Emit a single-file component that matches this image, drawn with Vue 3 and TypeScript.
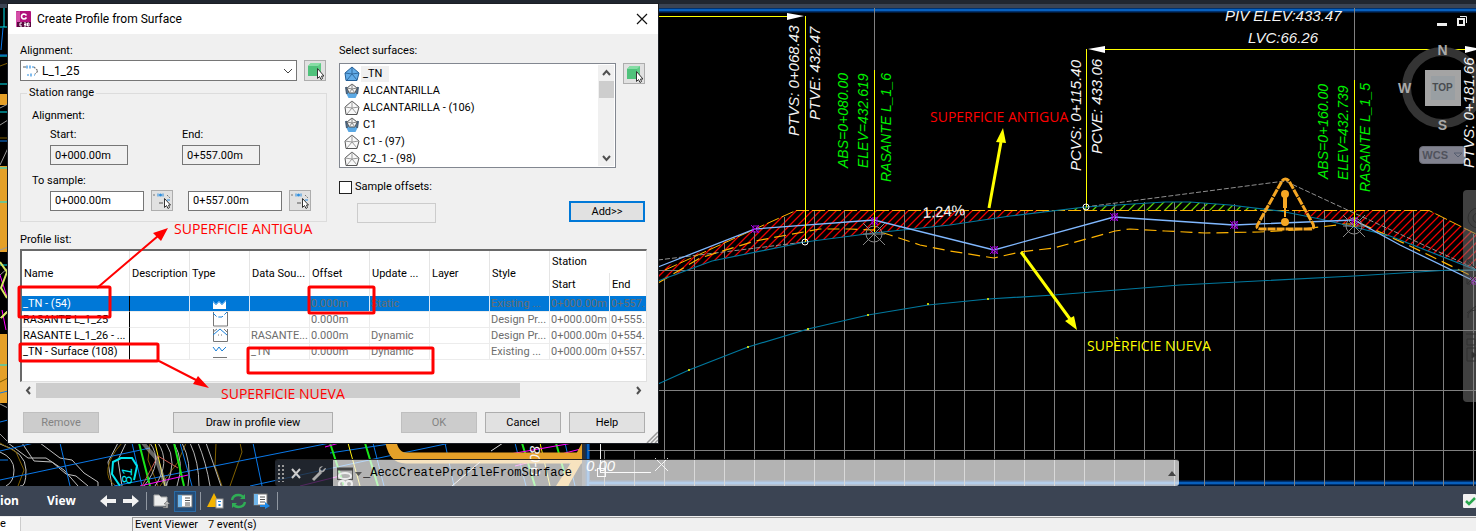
<script setup lang="ts">
import { ref } from 'vue'

interface ProfileRow {
  name: string
  type: 'static' | 'design' | 'design2' | 'surface'
  source: string
  update: string
  style: string
  start: string
  end: string
}

const alignment = ref('L_1_25')
const sampleStart = ref('0+000.00m')
const sampleEnd = ref('0+557.00m')
const sampleOffsets = ref(false)
const selectedProfile = ref(0)

const surfaces = [
  { name: '_TN', kind: 'active' },
  { name: 'ALCANTARILLA', kind: 'corridor' },
  { name: 'ALCANTARILLA - (106)', kind: 'tin' },
  { name: 'C1', kind: 'corridor' },
  { name: 'C1 - (97)', kind: 'tin' },
  { name: 'C2_1 - (98)', kind: 'tin' },
]

const profiles: ProfileRow[] = [
  { name: '_TN - (54)', type: 'static', source: '', update: 'Static', style: 'Existing ...', start: '0+000.00m', end: '0+557.' },
  { name: 'RASANTE L_1_25', type: 'design', source: '', update: '', style: 'Design Pr...', start: '0+000.00m', end: '0+555.' },
  { name: 'RASANTE L_1_26 - ...', type: 'design2', source: 'RASANTE...', update: 'Dynamic', style: 'Design Pr...', start: '0+000.00m', end: '0+554.' },
  { name: '_TN - Surface (108)', type: 'surface', source: '_TN', update: 'Dynamic', style: 'Existing ...', start: '0+000.00m', end: '0+557.' },
]

// Vertical grid lines: [x, top]
const verticals: [number, number][] = [
  [604, 450], [634, 450], [664, 278], [694, 257], [724, 243], [754, 231], [784, 217],
  [814, 210], [844, 210], [874, 8], [904, 210], [934, 210], [964, 210], [994, 210],
  [1024, 210], [1054, 210], [1084, 208], [1114, 203], [1144, 202], [1174, 202],
  [1204, 203], [1234, 204], [1264, 208], [1294, 210], [1324, 210], [1354, 8],
  [1384, 210], [1413, 210], [1443, 218], [1473, 234],
]
const horizontals = [270, 330, 390, 450]
const samples: [number, number][] = [[689, 370], [748, 347], [808, 329], [868, 315], [928, 304], [988, 299]]
const nodes: [number, number][] = [[755, 229], [874, 221], [994, 250], [1114, 217], [1234, 225], [1354, 221], [1474, 281]]
const contourX = [150, 158, 166, 174, 182, 190, 198, 206]

// 45 degree hatch strokes covering the span from x0 to x1 between two levels
const hatch = (x0: number, x1: number, top: number, bottom: number, step: number) => {
  const h = bottom - top
  let d = ''
  for (let x = x0 - h; x < x1; x += step) d += `M${x} ${bottom}L${x + h} ${top}`
  return d
}
</script>

<template>
  <div class="screen">
    <header class="ribbon-edge"></header>

    <main class="workspace">
      <svg class="drawing" aria-label="Profile view">
        <defs>
          <clipPath id="cut-left"><path d="M658 270L754 229L796 210H1060L1010 216L950 225L874 233L805 242L712 261L658 282z" /></clipPath>
          <clipPath id="cut-right"><path d="M1290 210H1429L1476 234V270L1390 236L1354 227L1320 219z" /></clipPath>
          <clipPath id="fill-mid"><path d="M1060 210L1085 207L1165 202H1190L1230 205L1280 211z" /></clipPath>
        </defs>
        <g transform="translate(0,-8)">
          <!-- plan view: left strip and lower area -->
          <g fill="none">
            <path fill="#e5a028" d="M0 94H8V105H0zM0 166H8V252H0zM0 334H8V403H0z" />
            <path stroke="#00e5f0" d="M0 27H8M4 8V27M0 56H8M0 84H8M0 112H8M0 168H8M0 202H8M0 265H8M0 365H8" />
            <path stroke="#0a78e8" d="M3 28L1 50M0 55H8M0 141H8M0 393L8 391M0 422L8 420M0 460H8" />
            <path stroke="#999" d="M0 125L8 120M0 108L8 104M0 165L8 148M0 250L8 247M0 275L8 268M0 318L8 310M0 404L8 408M0 434L8 442" />
            <path stroke="#f0f" d="M0 275L8 300M2 310L6 330" />
            <path stroke="#7d5c00" d="M0 66L8 63M0 138H8M0 382L8 378" />
            <path stroke="#d8e860" stroke-width="2" d="M0 262L7 272L1 288L7 298M1 318L7 312" />
            <path stroke="#bfbfbf" d="M0 452Q14 458 14 470T6 486M0 444Q26 452 26 470T20 486M8 443L28 458H46L64 470L78 486M22 443L34 461L52 462L66 474L76 476L88 486M40 443L60 458L72 460L84 473L98 482L98 486M118 443L108 462L112 486M126 443L118 460L122 486" />
            <path stroke="#806000" d="M0 443L16 452L24 470L18 486M122 443Q110 456 108 468T116 486M150 443L148 460L158 486M186 443L178 462L160 486M216 443L215 466L222 486M240 443L242 452L230 486" />
            <path stroke="#0a78e8" d="M0 451L34 443M0 480L150 448M60 443L70 486M114 486L330 443M132 443L142 486M253 443L262 486M180 443L192 486M330 453L396 443M250 486L360 462L450 443M373 443L384 486M445 443L454 486M515 443L526 486M565 443L575 486" />
            <path v-for="(x, i) in contourX" :key="x" stroke="#b4b4b4" :d="`M${x} 443Q${x + 14 - i} 462 ${x - 6 + i * 3} 486`" />
            <path stroke="#00e5f0" stroke-width="2" d="M120 486L112 474L113 462L121 458H132L137 466L134 480" />
            <path stroke="#19e619" stroke-width="2" d="M139 443L150 486M174 443L184 486M330 443L344 486M365 443L378 486M522 443L535 486M556 443L568 486" />
            <path stroke="#ffef10" d="M155 443L165 486M348 443L360 486M540 443L550 486" />
            <path stroke="#f0f" d="M140 486L188 475M325 447L350 440M510 454L590 440M515 466L600 444M300 486L340 476" />
            <path stroke="#c65a52" d="M142 486L158 456L178 468" />
            <path stroke="#c8c8c8" stroke-width="4" d="M143 443L156 458L166 486" opacity=".5" />
            <path stroke="#e5a028" stroke-width="11" d="M390 436Q392 458 406 458H586" />
            <path fill="#e5a028" d="M582 443V462L568 486H556L574 458z" />
            <path stroke="#ddd" d="M491 451L503 443M452 486L480 462" />
            <rect x="582" y="443" width="5" height="43" fill="#2a2e35" />
          </g>
          <text class="cad-text cyan" transform="translate(132,484) rotate(-90)">81</text>
          <text class="cad-text white" transform="translate(540,476) rotate(-90)">0-08</text>

          <!-- profile view -->
          <path d="M588 486V443M588 10H1476M588 483H1476" stroke="#00316e" stroke-width="5" fill="none" />
          <path d="M588 486V443M588 10H1476M588 483H1476" stroke="#0860bd" fill="none" stroke-width="2" />
          <path fill="#000" d="M658 13H1476V480H590V443H658z" />

          <g fill="none" stroke-width="1.300">
            <path clip-path="url(#cut-left)" stroke="#f00000" :d="hatch(658, 1060, 205, 285, 8)" />
            <path clip-path="url(#cut-right)" stroke="#f00000" :d="hatch(1290, 1476, 205, 275, 8)" />
            <path clip-path="url(#fill-mid)" stroke="#60d000" :d="hatch(1060, 1290, 198, 214, 9)" />
          </g>

          <g stroke="#808080" shape-rendering="crispEdges">
            <line v-for="[x, top] in verticals" :key="x" :x1="x + 0.5" :x2="x + 0.5" :y1="top" y2="486" />
            <line v-for="y in horizontals" :key="y" :x1="y === 450 ? 588 : 658" x2="1476" :y1="y + 0.5" :y2="y + 0.5" />
            <path d="M600.500 443V472M600 472.500H651M597.500 468.500H605.500V476.500H597.500z" stroke="#eee" fill="none" />
          </g>

          <g fill="none">
            <path stroke="#909090" stroke-dasharray="5 2" d="M658 260L805 242M1085 207L1285 181L1354 213L1476 269" />
            <path stroke="#ffb400" stroke-dasharray="13 3" d="M665 270L755 229L796 210.500H1429L1476 234" />
            <path stroke="#ffb400" stroke-width="1.200" stroke-dasharray="12 6" d="M658 283L700 258L755 241L820 229H850L874 230L890 235L920 245L950 251L994 258L1020 252L1054 248L1090 238L1115 231L1130 229L1165 231L1205 233L1260 232L1295 230L1345 224H1362L1410 246L1476 278" />
            <path stroke="#00789e" stroke-width="1.200" d="M658 281L712 261L805 242L874 233L950 225L1010 216L1085 207L1165 202H1190L1230 205L1280 211L1320 219L1354 227L1390 236L1476 270" />
            <path stroke="#00789e" stroke-width="1.200" d="M658 384L689 370L748 347L808 329L868 315L928 305L988 299L1054 295L1180 285L1354 276L1450 270H1476" />
            <path stroke="#80b8ff" stroke-width="1.300" d="M658 267L755 229L874 220L994 250L1114 217L1234 225L1354 220L1400 245L1476 282" />
          </g>
          <circle v-for="[x, y] in samples" :key="x" :cx="x" :cy="y" r="1" fill="#ff0" />
          <g v-for="[x, y] in nodes" :key="x" :transform="`translate(${x},${y})`" stroke="#a000d8" fill="none">
            <path d="M-4 -4L4 4M-4 4L4 -4M-2 -3H3V3H-2z" />
          </g>
          <g v-for="[x, y] in [[874, 234], [1354, 226]]" :key="x" :transform="`translate(${x},${y})`" stroke="#888" fill="none">
            <circle r="8" />
            <path d="M-11 11L11 -11M-11 -11L11 11M-11 0H11" />
          </g>

          <g stroke="#ff0" fill="none" shape-rendering="crispEdges">
            <path d="M658 16.500H788M805.500 16V242M874.500 70V232M1086.500 49V207M1104 49.500H1470M1354.500 80V227" />
          </g>
          <path fill="#fff" d="M787 13L804 16L787 20zM1105 46L1088 49L1105 53zM1465 46V53L1476 50V48z" />
          <g fill="none" stroke="#fff">
            <circle cx="805" cy="242" r="3" />
            <circle cx="1086" cy="207" r="3" />
          </g>

          <g class="cad-text white">
            <text transform="translate(799,136) rotate(-90)">PTVS: 0+068.43</text>
            <text transform="translate(820,120) rotate(-90)">PTVE: 432.47</text>
            <text transform="translate(1081,171) rotate(-90)">PCVS: 0+115.40</text>
            <text transform="translate(1102,154) rotate(-90)">PCVE: 433.06</text>
            <text x="1225" y="21">PIV ELEV:433.47</text>
            <text x="1248" y="43">LVC:66.26</text>
            <text x="586" y="471">0.00</text>
            <text class="grade" transform="translate(923,218) rotate(-4)">1.24%</text>
            <path d="M655 458L668 471M668 458L655 471" stroke="#ddd" />
          </g>
          <g class="cad-text label green">
            <text transform="translate(848,168) rotate(-90)">ABS=0+080.00</text>
            <text transform="translate(868,168) rotate(-90)">ELEV=432.619</text>
            <text transform="translate(891,182) rotate(-90)">RASANTE L_1_6</text>
            <text transform="translate(1328,179) rotate(-90)">ABS=0+160.00</text>
            <text transform="translate(1348,180) rotate(-90)">ELEV=432.739</text>
            <text transform="translate(1370,192) rotate(-90)">RASANTE L_1_5</text>
          </g>

          <g stroke="#f5a623" fill="none" stroke-linejoin="round">
            <path stroke-width="3" d="M1282 181Q1285 177 1289 181L1313 224Q1315 229 1310 229H1261Q1255 229 1258 224z" stroke-dasharray="8 1" />
            <path stroke-width="4" d="M1285 195V208" />
            <path stroke-width="2" d="M1285 208V217" />
            <circle cx="1285" cy="194" r="3" fill="#f5a623" stroke-width="2" />
            <circle cx="1285" cy="222" r="3" fill="#f5a623" stroke-width="2" />
          </g>
        </g>
      </svg>

      <!-- viewport controls -->
      <div class="viewport-buttons">
        <button type="button" aria-label="Minimize viewport">
          <svg width="12" height="12"><path d="M1 9.500H11" stroke="#eee" stroke-width="3" /></svg>
        </button>
        <button type="button" aria-label="Restore viewport">
          <svg width="12" height="12" fill="none" stroke="#eee"><path d="M4 1.500H10.500V8" /><path d="M2 4H8V10H2z" stroke-width="2" /></svg>
        </button>
      </div>
      <div class="view-cube">
        <span class="north">N</span><span class="west">W</span><span class="south">S</span>
        <button type="button" class="cube-face">TOP</button>
      </div>
      <button type="button" class="wcs">WCS<svg width="10" height="6"><path d="M1 1H9L5 5z" fill="none" stroke="#565e70" /></svg></button>
      <nav class="nav-bar" aria-label="Navigation bar">
        <svg width="13" height="212" fill="none" stroke="#303030">
          <circle cx="15" cy="28" r="10" /><circle cx="15" cy="28" r="5" />
          <path d="M4 94L13 85M4 89V94H9M4 70L13 79M4 75V70H9M4 123L13 116M5 128Q4 120 13 120M3 144H13M4 149H12V155H4zM4 158H13V171H4z" />
          <path d="M9 162L13 165L9 168z" fill="#303030" />
        </svg>
      </nav>

      <!-- command line -->
      <div class="command-line">
        <svg class="command-tools" width="58" height="27" fill="none">
          <path d="M4 5V22M8 5V22" stroke="#999" stroke-width="2" stroke-dasharray="2 2" />
          <path d="M17 9L25 18M25 9L17 18" stroke="#ccc" stroke-width="2" />
          <path d="M38 20L46 12" stroke="#aaa" stroke-width="3" />
          <path d="M50 8L47 11L45 9L48 6Q43 6 44 12Q49 14 51 8z" fill="#aaa" />
        </svg>
        <button type="button" class="recent" aria-label="Recent commands">
          <svg width="30" height="26" fill="none">
            <rect x="4.500" y="8.500" width="15" height="11" stroke="#555" /><path d="M4 9H20" stroke="#444" stroke-width="3" />
            <ellipse cx="12" cy="16" rx="6" ry="3" stroke="#eee" stroke-width="2" /><circle cx="9" cy="24" r="3" stroke="#eee" stroke-width="2" /><circle cx="16" cy="24" r="3" stroke="#eee" stroke-width="2" />
            <path d="M22 12H29L25.500 16z" fill="#555" />
          </svg>
        </button>
        <input class="command-input" aria-label="Command" value="_AeccCreateProfileFromSurface" />
        <button type="button" class="history" aria-label="Command history">
          <svg width="8" height="5"><path d="M0 5L4 0L8 5z" fill="#444" /></svg>
        </button>
      </div>

      <!-- dialog window -->
      <section class="dialog" role="dialog" aria-labelledby="dialog-title">
        <header class="title-bar">
          <svg width="16" height="17" aria-hidden="true">
            <rect width="15" height="16" rx="1" fill="#b0127b" /><path d="M0 1L4 0V16H0z" fill="#d44fa8" />
            <rect x="1" y="11" width="14" height="5" fill="#5a0840" />
            <path d="M10.500 4.500Q9.500 3 8 3Q5.500 3.200 5.500 5.500T8 8Q9.500 8 10.500 6.500" stroke="#fff" stroke-width="1.600" fill="none" />
            <path d="M6 12H4V15H6M8 12H10V15H8M8 13.500H10M11.500 12V15H13V12z" stroke="#fff" fill="none" />
          </svg>
          <h1 id="dialog-title">Create Profile from Surface</h1>
          <button type="button" class="close" aria-label="Close">
            <svg width="12" height="12"><path d="M1 1L11 11M11 1L1 11" stroke="#111" stroke-width="1.200" /></svg>
          </button>
        </header>

        <div class="dialog-body">
          <div class="top-columns">
            <div class="left-column">
              <label for="alignment">Alignment:</label>
              <div class="picker-row">
                <div class="combo">
                  <svg width="16" height="14" fill="none" stroke-width="1.200">
                    <path d="M0 3H3" stroke="#777" /><path d="M4 1.500V4.500M7 1.500V4.500M9 3H11M4 11H6M8 9.500V12.500M11 11H12" stroke="#2a8de0" />
                    <path d="M11 3L15 7L12 10" stroke="#777" stroke-dasharray="2 1" />
                  </svg>
                  <select id="alignment" v-model="alignment">
                    <option>L_1_25</option>
                  </select>
                  <svg class="chevron" width="10" height="6"><path d="M1 1L5 5L9 1" stroke="#444" fill="none" /></svg>
                </div>
                <button type="button" class="pick" aria-label="Pick alignment">
                  <svg width="18" height="18"><path d="M2 4L5 1H15V11L12 14H2z" fill="#5ecb85" /><path d="M2 4L5 1H15L12 4z" fill="#86dda5" /><path d="M12 4V14H2V4z" fill="#4fc27b" /><path d="M11.500 6.500V16.500L13.500 14.500L15 17.500L16.500 16.500L15.500 14H18z" fill="#fff" stroke="#333" /></svg>
                </button>
              </div>

              <fieldset>
                <legend>Station range</legend>
                <div class="group-label">Alignment:</div>
                <div class="stations">
                  <div class="field">
                    <label for="start">Start:</label>
                    <input id="start" readonly value="0+000.00m" />
                  </div>
                  <div class="field">
                    <label for="end">End:</label>
                    <input id="end" readonly value="0+557.00m" />
                  </div>
                </div>
                <div id="to-sample" class="group-label">To sample:</div>
                <div class="samples">
                  <input v-model="sampleStart" aria-labelledby="to-sample" />
                  <button type="button" class="pick" aria-label="Pick start station">
                    <svg width="18" height="18" fill="none"><path d="M0 3H3M14 3L17 6" stroke="#777" stroke-dasharray="2 1" /><path d="M5 1.500V4.500M10 1.500V4.500M14 8H17" stroke="#2a8de0" /><circle cx="7.500" cy="3" r="1.500" fill="#2a8de0" /><path d="M6 11H10" stroke="#555" /><path d="M11.500 6.500V15.500L13.500 13.500L15 16.500L16.500 15.500L15.500 13H17.500z" fill="#fff" stroke="#333" /></svg>
                  </button>
                  <input v-model="sampleEnd" class="second" aria-label="To sample end station" />
                  <button type="button" class="pick" aria-label="Pick end station">
                    <svg width="18" height="18" fill="none"><path d="M0 3H3M14 3L17 6" stroke="#777" stroke-dasharray="2 1" /><path d="M5 1.500V4.500M10 1.500V4.500M14 8H17" stroke="#2a8de0" /><circle cx="7.500" cy="3" r="1.500" fill="#2a8de0" /><path d="M6 11H10" stroke="#555" /><path d="M11.500 6.500V15.500L13.500 13.500L15 16.500L16.500 15.500L15.500 13H17.500z" fill="#fff" stroke="#333" /></svg>
                  </button>
                </div>
              </fieldset>
            </div>

            <div class="right-column">
              <div id="surfaces-label" class="caption">Select surfaces:</div>
              <div class="surface-row">
                <div class="list-box">
                  <ul role="listbox" aria-labelledby="surfaces-label">
                    <li v-for="(s, i) in surfaces" :key="s.name" role="option" :aria-selected="i === 0">
                      <svg v-if="s.kind === 'corridor'" width="16" height="16">
                        <path d="M1.500 4H14.500L13 12L11.500 15H4.500L3 12z" fill="#5aa8e4" /><path d="M2 4L3 11M14 4L13 11" stroke="#4a6078" stroke-width="2" /><path d="M8 1L13 5L11 10H5L3 5z" fill="#f4f4f4" stroke="#555" /><path d="M8 1V6M3 5L8 6L13 5M5 10L8 6L11 10" stroke="#888" fill="none" />
                      </svg>
                      <svg v-else width="16" height="16">
                        <path d="M8 1L15 7L13 14.500H2L1 7z" :fill="s.kind === 'active' ? '#62ace8' : '#f8f8f8'" :stroke="s.kind === 'active' ? '#245f97' : '#555'" />
                        <path d="M8 1V8M1 7L8 8L15 7M3 14L8 8L13 14" :stroke="s.kind === 'active' ? '#326b9f' : '#999'" fill="none" />
                      </svg>
                      <span :class="{ focused: i === 0 }">{{ s.name }}</span>
                    </li>
                  </ul>
                  <div class="v-scroll" aria-hidden="true">
                    <svg width="9" height="16"><path d="M1 10L4.500 6L8 10" stroke="#505050" stroke-width="2" fill="none" /></svg>
                    <i></i>
                    <svg width="9" height="16"><path d="M1 6L4.500 10L8 6" stroke="#505050" stroke-width="2" fill="none" /></svg>
                  </div>
                </div>
                <button type="button" class="pick" aria-label="Pick surface">
                  <svg width="18" height="18"><path d="M2 4L5 1H15V11L12 14H2z" fill="#5ecb85" /><path d="M2 4L5 1H15L12 4z" fill="#86dda5" /><path d="M12 4V14H2V4z" fill="#4fc27b" /><path d="M11.500 6.500V16.500L13.500 14.500L15 17.500L16.500 16.500L15.500 14H18z" fill="#fff" stroke="#333" /></svg>
                </button>
              </div>
              <div class="check-row">
                <input id="offsets" v-model="sampleOffsets" type="checkbox" />
                <label for="offsets">Sample offsets:</label>
              </div>
              <div class="add-row">
                <input disabled aria-label="Offset values" />
                <button type="button" class="button default">Add&gt;&gt;</button>
              </div>
            </div>
          </div>

          <div id="profile-label" class="profile-label">Profile list:</div>
          <div class="table-frame">
            <table aria-labelledby="profile-label">
              <colgroup>
                <col class="c-name" /><col v-for="n in 8" :key="n" class="c-mid" /><col />
              </colgroup>
              <thead>
                <tr>
                  <th rowspan="2">Name</th><th rowspan="2">Description</th><th rowspan="2">Type</th>
                  <th rowspan="2">Data Sou...</th><th rowspan="2">Offset</th><th rowspan="2">Update ...</th>
                  <th rowspan="2">Layer</th><th rowspan="2">Style</th>
                  <th colspan="2" class="group">Station</th>
                </tr>
                <tr><th class="sub">Start</th><th class="sub">End</th></tr>
              </thead>
              <tbody>
                <tr v-for="(p, i) in profiles" :key="p.name" :class="{ selected: i === selectedProfile }" @click="selectedProfile = i">
                  <td class="name">{{ p.name }}</td>
                  <td></td>
                  <td class="type">
                    <svg width="16" height="15" fill="none">
                      <path v-if="p.type === 'static'" d="M1 13V6L4 9L7 6L10 9L14 5V13z" fill="#fff" />
                      <path v-if="p.type === 'static'" d="M1 5L4 8L7 5L10 8L14 4" stroke="#4fa3ea" />
                      <path v-if="p.type === 'design'" d="M1.500 0V14H15.500V0" stroke="#777" />
                      <path v-if="p.type === 'design'" d="M1 1L5 5H10L15 0" stroke="#1a80d8" stroke-dasharray="5 2" />
                      <path v-if="p.type === 'design2'" d="M1.500 1V13.500H15.500V1M1 4L5 1M15 4L12 1M6 7H7M9 7H10" stroke="#777" />
                      <path v-if="p.type === 'design2'" d="M1 7L8 1L15 7" stroke="#1a80d8" />
                      <path v-if="p.type === 'surface'" d="M1 13.500H15" stroke="#777" />
                      <path v-if="p.type === 'surface'" d="M1 3L4 7L7 3L10 7L14 3" stroke="#1a80d8" />
                    </svg>
                  </td>
                  <td>{{ p.source }}</td>
                  <td>0.000m</td>
                  <td>{{ p.update }}</td>
                  <td></td>
                  <td>{{ p.style }}</td>
                  <td>{{ p.start }}</td>
                  <td>{{ p.end }}</td>
                </tr>
              </tbody>
            </table>
          </div>
          <div class="h-scroll" aria-hidden="true">
            <svg width="16" height="15"><path d="M10 4L7 7.500L10 11" stroke="#505050" stroke-width="2" fill="none" /></svg>
            <i></i>
            <svg width="16" height="15"><path d="M6 4L9 7.500L6 11" stroke="#505050" stroke-width="2" fill="none" /></svg>
          </div>

          <footer class="actions">
            <button type="button" class="button" disabled>Remove</button>
            <button type="button" class="button wide">Draw in profile view</button>
            <button type="button" class="button push" disabled>OK</button>
            <button type="button" class="button">Cancel</button>
            <button type="button" class="button">Help</button>
          </footer>
        </div>
        <svg class="grip" width="12" height="12"><path d="M1 12L12 1M5 12L12 5M9 12L12 9" stroke="#999" stroke-width="1.500" /></svg>
      </section>

      <!-- markup laid over the window and the drawing -->
      <svg class="markup">
        <g transform="translate(0,-8)">
          <text class="cad-text white" transform="translate(1474,168) rotate(-90)">PTVS: 0+181.66</text>
          <g fill="none" stroke="#f00" stroke-width="3">
            <rect x="19" y="287" width="91" height="30" rx="1" />
            <rect x="309" y="287" width="65" height="26" rx="1" />
            <rect x="20" y="344" width="138" height="17" rx="1" />
            <rect x="248" y="348" width="185" height="25" rx="1" />
          </g>
          <path stroke="#f00" stroke-width="2" fill="none" d="M97 288L158 236M159 361L198 381" />
          <path fill="#f00" d="M168 228L161 241L153 233zM209 388L193 384L198 376z" />
          <path stroke="#ff0" stroke-width="3" fill="none" d="M989 208L1001 142M1021 252L1070 319" />
          <path fill="#ff0" d="M1003 128L1006 143L996 142zM1077 330L1065 321L1074 316z" />
          <g class="note">
            <text x="174" y="234" class="red">SUPERFICIE ANTIGUA</text>
            <text x="221" y="399" class="red">SUPERFICIE NUEVA</text>
            <text x="930" y="122" class="red strong">SUPERFICIE ANTIGUA</text>
            <text x="1087" y="351" class="yellow">SUPÈRFICIE NUEVA</text>
          </g>
        </g>
      </svg>
    </main>

    <div class="toolbar">
      <button type="button" class="menu">ion</button>
      <button type="button" class="menu view">View</button>
      <button type="button" class="tool" aria-label="Back"><svg width="16" height="14"><path d="M0 7L7 1V5H16V9H7V13z" fill="#f2f2f2" /></svg></button>
      <button type="button" class="tool" aria-label="Forward"><svg width="16" height="14"><path d="M16 7L9 1V5H0V9H9V13z" fill="#f2f2f2" /></svg></button>
      <i class="divider"></i>
      <button type="button" class="tool" aria-label="Open folder"><svg width="17" height="16"><path d="M1 2H6L8 4H14V13H1z" fill="#eee" stroke="#aaa" /><path d="M10 14H13V11H11L14 8L17 11H15V15H10z" fill="#bbb" stroke="#555" stroke-width=".5" /></svg></button>
      <button type="button" class="tool pressed" aria-label="Event panel"><svg width="16" height="14"><rect x="1" y="1" width="14" height="12" fill="#fff" stroke="#777" /><rect x="1" y="1" width="4" height="12" fill="#71b6ea" /><path d="M8 4H13M8 6.500H13M8 9H13M8 11H13" stroke="#555" /></svg></button>
      <i class="divider"></i>
      <button type="button" class="tool" aria-label="Warnings"><svg width="17" height="16"><path d="M7 0L0 14H9V6L10 6z" fill="#f5b400" /><rect x="9" y="6" width="7" height="9" fill="#fff" stroke="#999" /><path d="M11 8.500H14M11 12H14M12.500 11V13" stroke="#1a80d8" /></svg></button>
      <button type="button" class="tool" aria-label="Refresh"><svg width="17" height="16" fill="none" stroke="#2fae55" stroke-width="2.400"><path d="M2 7Q3 2 8.500 2Q12 2 14 5M15 9Q14 14 8.500 14Q5 14 3 11" /><path d="M15 1V6H10zM2 15V10H7z" fill="#2fae55" stroke="none" /></svg></button>
      <button type="button" class="tool" aria-label="Export events"><svg width="17" height="16"><rect x="1" y="1" width="13" height="11" fill="#fff" stroke="#777" /><rect x="1" y="1" width="4" height="11" fill="#71b6ea" /><path d="M7 4H12M7 6.500H12M7 9H12" stroke="#555" /><path d="M7 12H12V9L17 13L12 16V14H7z" fill="#1e88e5" /></svg></button>
      <i class="divider"></i>
      <span class="status-ok"><svg width="13" height="14"><path d="M3 7L6 10L12 4" stroke="#2aa84f" stroke-width="2.500" fill="none" /></svg></span>
    </div>
    <div class="event-strip">
      <span class="tab">e</span>
      <div class="event-head"><span>Event Viewer</span><span>7 event(s)</span></div>
    </div>
  </div>
</template>

<style>
body { margin: 0; background: #000; overflow: hidden; }
</style>

<style scoped>
* { box-sizing: border-box; }
.screen {
  display: flex; flex-direction: column; height: 100vh; overflow: hidden;
  font: 11px/14px Roboto, "Noto Sans", sans-serif; color: #000; background: #000;
}
button, input, select { font: inherit; color: inherit; }
button { padding: 0; border: 0; background: none; }
svg { display: block; flex: none; }

.ribbon-edge { flex: none; height: 8px; background: #20262f; border-bottom: 4px solid #3b4453; }
.workspace { flex: 1; position: relative; min-height: 0; }
.drawing, .markup { position: absolute; inset: 0; width: 100%; height: 100%; }
.markup { pointer-events: none; }

.cad-text { font: italic 15px "Liberation Sans", sans-serif; }
.cad-text.label { font-size: 14px; }
.grade { font-style: normal; }
.white { fill: #f4f4f4; }
.green { fill: #00f000; }
.cyan { fill: #00e5f0; }
.note { font: 14px "Open Sans", "Noto Sans", sans-serif; }
.red { fill: #f00; }
.yellow { fill: #ff0; }
.strong { font-weight: 500; }

.viewport-buttons { position: absolute; top: 7px; right: 8px; display: flex; gap: 8px; }
.view-cube {
  position: absolute; top: 39px; right: -7px; width: 81px; height: 81px; border-radius: 50%;
  border: 9px solid #343434; display: grid; place-items: center;
  font: bold 14px/14px "Liberation Sans", sans-serif; color: #aaa;
}
.view-cube span { position: absolute; }
.north { top: -13px; }
.south { bottom: -13px; }
.west { left: -13px; }
.cube-face {
  width: 36px; height: 36px; background: #999fa3; border: 6px solid #a4a4a4;
  font: bold 10px/12px "Liberation Sans", sans-serif; color: #484c50;
}
.wcs {
  position: absolute; top: 138px; right: 10px; width: 47px; height: 18px; border-radius: 4px;
  background: #81828f; border: 1px solid #6c6d78; color: #50525c;
  font: bold 11px/14px "Liberation Sans", sans-serif;
  display: flex; align-items: center; justify-content: space-around;
}
.nav-bar { position: absolute; top: 182px; right: 0; width: 13px; height: 212px; border-radius: 4px 0 0 4px; background: rgba(128, 128, 128, .5); overflow: hidden; }

.command-line {
  position: absolute; left: 275px; right: 297px; bottom: 0; height: 27px; display: flex; align-items: center;
  border-top: 1px solid #222; border-radius: 3px; overflow: hidden;
}
.command-tools { background: rgba(40, 46, 56, .8); }
.command-line > :not(.command-tools) { background: rgba(255, 255, 255, .7); height: 100%; }
.recent { width: 30px; display: grid; place-items: center; }
.command-input { flex: 1; border: 0; padding: 0; outline: 0; font: 12px/16px "Liberation Mono", monospace; }
.history { width: 14px; display: grid; place-items: center; }

.dialog {
  position: absolute; left: 8px; top: -4px; width: 650px; background: #f0f0f0;
  box-shadow: 0 0 0 1px #1b1e24;
}
.title-bar { display: flex; align-items: center; gap: 5px; height: 30px; padding: 0 10px 0 8px; background: #fff; }
.title-bar h1 { flex: 1; margin: 0; font: 12px/16px Roboto, "Noto Sans", sans-serif; }
.dialog-body { padding: 10px 13px 10px 12px; }
.top-columns { display: flex; gap: 12px; height: 185px; }
.left-column { width: 307px; }
.left-column > label, .caption { display: block; }
.picker-row { display: flex; justify-content: space-between; margin-top: 2px; }
.left-column .picker-row { width: 306px; }
.combo { position: relative; display: flex; align-items: center; width: 277px; height: 21px; padding-left: 2px; background: #fff; border: 1px solid #767676; }
.combo select { flex: 1; appearance: none; border: 0; background: transparent; padding: 0 3px; font-size: 12px; outline: 0; }
.chevron { position: absolute; right: 3px; pointer-events: none; }
.pick { width: 22px; height: 21px; display: grid; place-items: center; border: 1px solid #adadad; background: #e1e1e1; flex: none; }
fieldset { height: 136px; margin: 5px 0 0; padding: 0 11px; border: 1px solid #dcdcdc; min-width: 0; }
legend { margin-left: -5px; padding: 0 2px; }
.group-label { margin-top: 9px; }
.stations { display: grid; grid-template-columns: 132px 80px; margin: 5px 0 0 18px; }
.field label { display: block; }
input:not([type]), .command-input { min-width: 0; }
.field input, .samples input, .add-row input { height: 20px; padding: 0 4px; border: 1px solid #767676; background: #fff; display: block; }
.field input { width: 78px; margin-top: 3px; background: #f0f0f0; }
.stations + .group-label { margin-top: 9px; }
.samples { display: flex; align-items: center; gap: 7px; margin: 2px 0 0 18px; }
.samples input { width: 94px; }
.samples .second { margin-left: 8px; }

.right-column { flex: 1; min-width: 0; }
.surface-row { display: flex; gap: 7px; margin-top: 5px; }
.list-box { flex: 1; min-width: 0; height: 105px; display: flex; background: #fff; border: 1px solid #828790; padding: 1px; }
ul { flex: 1; margin: 0; padding: 0 0 0 3px; list-style: none; overflow: hidden; }
li { display: flex; align-items: center; height: 17px; }
li span { padding: 1px 4px 1px 2px; margin-left: 1px; }
li .focused { background: #f0f0f0; padding-right: 7px; }
.v-scroll { width: 16px; background: #f0f0f0; display: flex; flex-direction: column; align-items: center; }
.v-scroll i { width: 15px; height: 17px; background: #cdcdcd; margin-bottom: auto; }
.check-row { display: flex; align-items: center; gap: 3px; margin-top: 12px; height: 14px; }
.check-row input { appearance: none; width: 13px; height: 13px; margin: 0; border: 1px solid #222; background: #fff; }
.check-row input:checked { background: #0078d7; }
.add-row { display: flex; justify-content: space-between; margin-top: 7px; padding-left: 18px; }
.add-row input { width: 79px; margin-top: 2px; border-color: #ccc; background: #f0f0f0; }

.button { width: 76px; height: 21px; border: 1px solid #adadad; background: #e1e1e1; }
.button:disabled { background: #ccc; border-color: #bfbfbf; color: #838383; }
.button.default { border: 2px solid #0078d7; }
.button.wide { width: 160px; margin-left: 66px; }
.button.push { margin-left: auto; }

.profile-label { margin-top: 4px; }
.table-frame { height: 133px; margin-top: 2px; overflow: hidden; background: #fff; border: 1px solid #e0e0e0; border-top: 2px solid #696969; border-left: 2px solid #696969; margin-right: -2px; }
table { width: 100%; table-layout: fixed; border-collapse: separate; border-spacing: 0; }
.c-name { width: 108px; }
.c-mid { width: 60px; }
th { padding: 0 0 0 2px; font-weight: 400; text-align: left; border-right: 1px solid #e5e5e5; white-space: nowrap; overflow: hidden; }
th:last-child { border-right: 0; }
thead tr { height: 22px; }
thead tr + tr { height: 23px; }
td { height: 16px; padding: 0 0 0 1px; line-height: 15px; color: #6d6d6d; border-right: 1px solid #ececec; border-bottom: 1px solid #ececec; white-space: nowrap; overflow: hidden; }
td.name { color: #000; border-right-color: #000; }
td:last-child { border-right: 0; }
.selected td { background: #0078d7; border-right-color: #d8e8f8; }
.selected td.name { color: #fff; border-right-color: #000; }
.type svg { margin: 0 auto; }
.h-scroll { display: flex; align-items: center; height: 17px; background: #f0f0f0; margin-right: -2px; }
.h-scroll i { width: 484px; height: 15px; background: #cdcdcd; margin-right: auto; }
.actions { display: flex; gap: 8px; margin-top: 13px; padding-left: 3px; }
.grip { position: absolute; right: 0; bottom: 0; }

.toolbar { flex: none; height: 30px; display: flex; align-items: center; background: #3b4453; position: relative; }
.menu { color: #fff; font: bold 12px/16px "Open Sans", sans-serif; }
.menu.view { margin: 0 21px 0 28px; }
.tool { width: 22px; height: 21px; display: grid; place-items: center; border: 1px solid transparent; margin-right: 1px; }
.tool.pressed { background: #234d79; border-color: #2b6aa3; }
.divider { width: 1px; height: 18px; background: #9097a1; margin: 0 4px 0 3px; }
.status-ok { margin-left: auto; background: #f2f2f2; border-radius: 1px; }
.event-strip { flex: none; height: 15px; display: flex; background: #f0f0f0; overflow: hidden; padding-top: 1px; }
.tab { width: 21px; height: 14px; background: #fff; border-right: 1px solid #ccc; }
.event-head { flex: 1; display: flex; gap: 10px; margin-left: 111px; padding-left: 2px; height: 14px; border-top: 1px solid #999; border-left: 1px solid #999; line-height: 13px; }
</style>
